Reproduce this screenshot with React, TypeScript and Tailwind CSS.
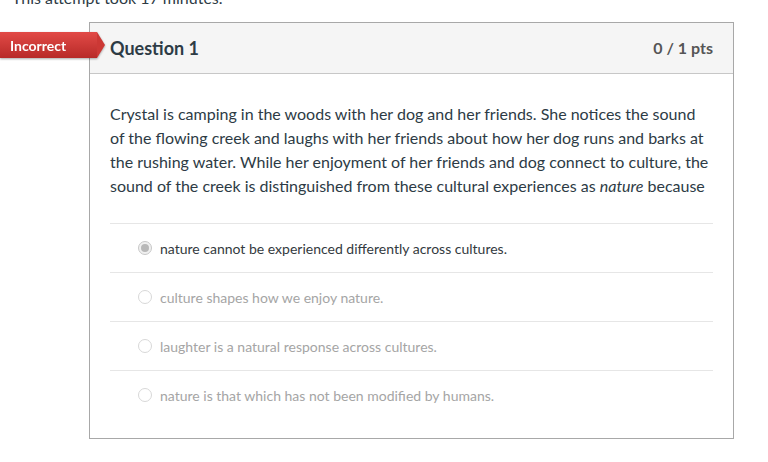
import React from 'react'

const answers = [
  { text: 'nature cannot be experienced differently across cultures.', selected: true },
  { text: 'culture shapes how we enjoy nature.', selected: false },
  { text: 'laughter is a natural response across cultures.', selected: false },
  { text: 'nature is that which has not been modified by humans.', selected: false },
]

function Radio({ selected }: { selected: boolean }) {
  if (selected) {
    return (
      <span className="flex h-[14px] w-[14px] shrink-0 items-center justify-center rounded-full border border-[#c8c8c8] bg-[#f0f0f0]">
        <span className="h-[8px] w-[8px] rounded-full bg-[#b8b8b8]" />
      </span>
    )
  }
  return <span className="h-[14px] w-[14px] shrink-0 rounded-full border border-[#d8d8d8] bg-white" />
}

export default function App() {
  return (
    <div className="relative h-[462px] overflow-hidden bg-white font-['Lato','Liberation_Sans',sans-serif] text-[#2d3b45]">
      <div className="-mt-[14px] h-[36px] pl-[12px] text-[16px] leading-[24px] text-[#2d3b45]">
        This attempt took 17 minutes.
      </div>

      <div className="ml-[89px] w-[645px] border border-[#a8a8a8]">
        <div className="flex h-[51px] items-center justify-between border-b border-[#c7c7c7] bg-[#f5f5f5] pl-[20px] pr-[20px]">
          <h2 className="text-[18px] font-bold text-[#2d3b45]">Question 1</h2>
          <span className="text-[16px] font-bold text-[#555555]">0 / 1 pts</span>
        </div>

        <div className="px-[20px] pt-[28px] pb-[19px]">
          <p className="text-[16px] leading-[24px] text-[#2d3b45]">
            Crystal is camping in the woods with her dog and her friends. She notices the sound of the flowing creek and
            laughs with her friends about how her dog runs and barks at the rushing water. While her enjoyment of her
            friends and dog connect to culture, the sound of the creek is distinguished from these cultural experiences
            as <em>nature</em> because
          </p>

          <div className="mt-[25px]">
            {answers.map((a) => (
              <div key={a.text} className="flex h-[49px] items-center gap-[8px] border-t border-[#e6e6e6] pl-[28px]">
                <Radio selected={a.selected} />
                <span className={`text-[14px] ${a.selected ? 'text-[#333a40]' : 'text-[#a5a5a5]'}`}>{a.text}</span>
              </div>
            ))}
          </div>
        </div>
      </div>

      {/* badge sits over the card edge */}
      <div className="absolute left-0 top-[32px] flex h-[26px] items-center drop-shadow-[0_1px_1px_rgba(0,0,0,0.35)]">
        <div className="flex h-full w-[97px] items-center bg-gradient-to-b from-[#e24a47] to-[#b82a28] pl-[10px] text-[14px] font-bold text-white">
          Incorrect
        </div>
        <div className="h-0 w-0 border-y-[13px] border-l-[8px] border-y-transparent border-l-[#cc3835]" />
      </div>
    </div>
  )
}
